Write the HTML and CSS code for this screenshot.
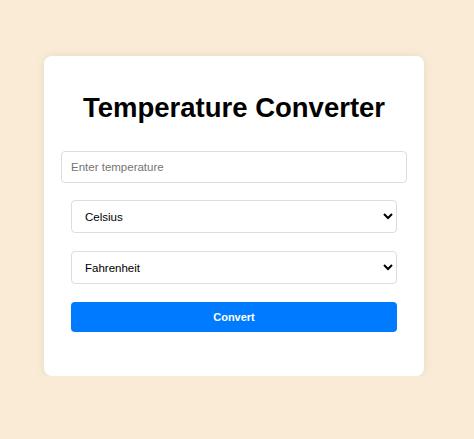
FILE: index.html
```html
<!DOCTYPE html>
<html lang="en">
<head>
    <meta charset="UTF-8">
    <meta name="viewport" content="width=device-width, initial-scale=1.0">
    <title>Temperature Converter</title>
    <link rel="stylesheet" href="styles.css">
</head>
<body>
    <div class="container">
        <h1>Temperature Converter</h1>
        <input type="number" id="temperature" class="temp-input" placeholder="Enter temperature">
        <div class="controls">
            <select id="from-unit">
                <option value="C">Celsius</option>
                <option value="F">Fahrenheit</option>
                <option value="K">Kelvin</option>
            </select>
            <select id="to-unit">
                <option value="F">Fahrenheit</option>
                <option value="C">Celsius</option>
                <option value="K">Kelvin</option>
            </select>
            <button id="convert-btn">Convert</button>
        </div>
    </div>
</body>
</html>
```

FILE: styles.css
```css
body {
    background-color: #faebd7;
    font-family: 'Liberation Sans', Arial, sans-serif;
    margin: 0;
    padding: 56px 0 0 44px;
}

.container {
    width: 380px;
    height: 320px;
    box-sizing: border-box;
    padding: 36px 17px 0;
    background: #ffffff;
    border-radius: 8px;
    box-shadow: 0 0 10px rgba(0, 0, 0, 0.08);
    display: flex;
    flex-direction: column;
}

h1 {
    margin: 0 0 28px;
    font-size: 27.5px;
    font-weight: bold;
    text-align: center;
    color: #000000;
    line-height: 31px;
}

.temp-input {
    height: 32px;
    box-sizing: border-box;
    padding: 0 9px;
    border: 1px solid #dddddd;
    border-radius: 4px;
    font-family: inherit;
    font-size: 11.5px;
    outline: none;
}

.temp-input::placeholder {
    color: #757575;
}

.controls {
    display: flex;
    flex-direction: column;
    gap: 18px;
    padding: 17px 10px 0;
}

.controls select {
    height: 33px;
    padding: 0 8px 0 9px;
    border: 1px solid #dddddd;
    border-radius: 4px;
    background: #ffffff;
    color: #000000;
    font-family: inherit;
    font-size: 11.5px;
}

.controls button {
    height: 30px;
    border: none;
    border-radius: 4px;
    background-color: #007bff;
    color: #ffffff;
    font-family: inherit;
    font-size: 11px;
    font-weight: bold;
    cursor: pointer;
}
```
